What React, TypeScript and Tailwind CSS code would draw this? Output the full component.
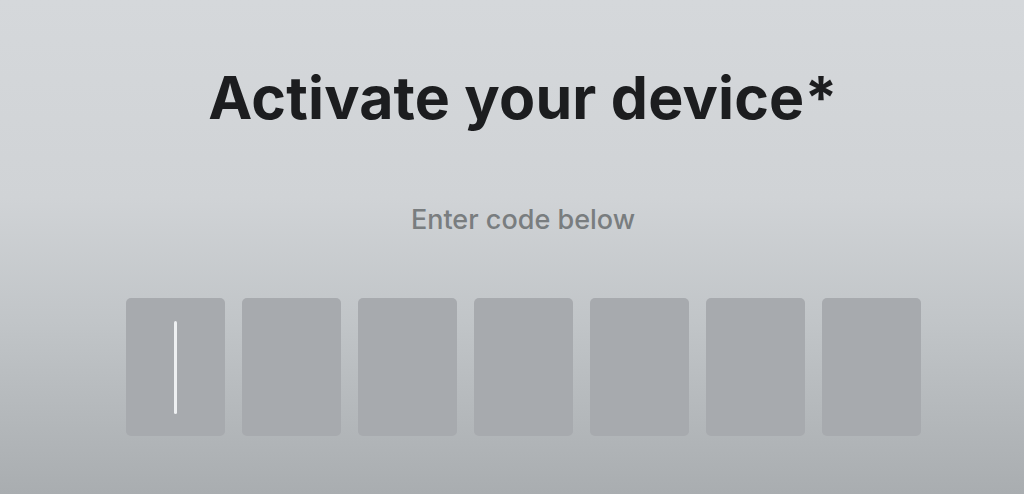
export default function App() {
  const boxes = [0, 1, 2, 3, 4, 5, 6];
  return (
    <div className="w-[1024px] h-[494px] overflow-hidden flex flex-col items-center pl-[22px] bg-[linear-gradient(180deg,#d5d8db_0%,#d0d3d6_40%,#c1c5c8_65%,#a9adb0_100%)]" style={{ fontFamily: '"Inter", "Liberation Sans", sans-serif' }}>
      <h1 className="mt-[62px] text-[59px] leading-[72px] font-bold tracking-[0.2px] text-[#1c1d1f]">
        Activate your device*
      </h1>
      <p className="mt-[71px] text-[27px] leading-[30px] font-medium text-[#797d7f]">Enter code below</p>
      <div className="mt-[63px] flex gap-[17px]">
        {boxes.map((i) => (
          <div
            key={i}
            className="w-[99px] h-[138px] rounded-[5px] bg-[#a7aaae] flex items-center justify-center"
          >
            {i === 0 && <div className="w-[3px] h-[93px] bg-[#eef0f2] rounded-full" />}
          </div>
        ))}
      </div>
    </div>
  );
}
